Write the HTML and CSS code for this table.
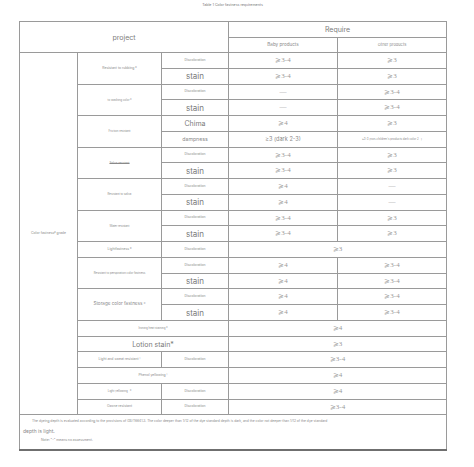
FILE: index.html
```html
<!DOCTYPE html>
<html>
<head>
<meta charset="utf-8">
<link rel="stylesheet" href="styles.css">
</head>
<body>
<div class="page">
  <div class="title">Table 1 Color fastness requirements</div>
  <table class="grid">
    <colgroup>
      <col class="c1"><col class="c2"><col class="c3"><col class="c4"><col class="c5">
    </colgroup>
    <tr class="h">
      <td colspan="3" rowspan="2" class="big">project</td>
      <td colspan="2" class="big">Require</td>
    </tr>
    <tr class="h">
      <td class="mid">Baby products</td>
      <td class="sm">Other products</td>
    </tr>
    <tr>
      <td rowspan="23" class="tiny">Color fastness<sup>a</sup> grade</td>
      <td rowspan="2" class="tiny">Resistant to rubbing <sup>b</sup></td>
      <td class="tiny">Discoloration</td>
      <td class="v">⩾3-4</td><td class="v">⩾3</td>
    </tr>
    <tr><td class="st">stain</td><td class="v">⩾3-4</td><td class="v">⩾3</td></tr>
    <tr>
      <td rowspan="2" class="xtiny">to washing color <sup>b</sup></td>
      <td class="tiny">Discoloration</td>
      <td class="v">—</td><td class="v">⩾3-4</td>
    </tr>
    <tr><td class="st">stain</td><td class="v">—</td><td class="v">⩾3-4</td></tr>
    <tr>
      <td rowspan="2" class="xtiny">Friction resistant</td>
      <td class="chima">Chima</td>
      <td class="v">⩾4</td><td class="v">⩾3</td>
    </tr>
    <tr><td class="damp">dampness</td><td class="dk">≥3 (dark 2-3)</td><td class="xtiny">≥3-3 (non-children's products dark color 2 &nbsp;&nbsp;)</td></tr>
    <tr>
      <td rowspan="2" class="xtiny"><span class="strike">Saliva resistant</span></td>
      <td class="tiny">Discoloration</td>
      <td class="v">⩾3-4</td><td class="v">⩾3</td>
    </tr>
    <tr><td class="st">stain</td><td class="v">⩾3-4</td><td class="v">⩾3</td></tr>
    <tr>
      <td rowspan="2" class="xtiny">Resistant to saliva</td>
      <td class="tiny">Discoloration</td>
      <td class="v">⩾4</td><td class="v">—</td>
    </tr>
    <tr><td class="st">stain</td><td class="v">⩾4</td><td class="v">—</td></tr>
    <tr>
      <td rowspan="2" class="xtiny">Water resistant</td>
      <td class="tiny">Discoloration</td>
      <td class="v">⩾3-4</td><td class="v">⩾3</td>
    </tr>
    <tr><td class="st">stain</td><td class="v">⩾3-4</td><td class="v">⩾3</td></tr>
    <tr>
      <td class="tiny">Lightfastness <sup>b</sup></td>
      <td class="tiny">Discoloration</td>
      <td colspan="2" class="v">⩾3</td>
    </tr>
    <tr>
      <td rowspan="2" class="xtiny">Resistant to perspiration color fastness</td>
      <td class="tiny">Discoloration</td>
      <td class="v">⩾4</td><td class="v">⩾3-4</td>
    </tr>
    <tr><td class="st">stain</td><td class="v">⩾4</td><td class="v">⩾3-4</td></tr>
    <tr>
      <td rowspan="2" class="mid">Storage color fastness <sup>c</sup></td>
      <td class="tiny">Discoloration</td>
      <td class="v">⩾4</td><td class="v">⩾3-4</td>
    </tr>
    <tr><td class="st">stain</td><td class="v">⩾4</td><td class="v">⩾3-4</td></tr>
    <tr>
      <td colspan="2" class="xtiny">Ironing heat staining <sup>d</sup></td>
      <td colspan="2" class="v">⩾4</td>
    </tr>
    <tr>
      <td colspan="2" class="chima">Lotion stain*</td>
      <td colspan="2" class="v">⩾3</td>
    </tr>
    <tr>
      <td class="tiny">Light and sweat resistant <sup>)</sup></td>
      <td class="tiny">Discoloration</td>
      <td colspan="2" class="v">⩾3-4</td>
    </tr>
    <tr>
      <td colspan="2" class="tiny">Phenol yellowing <sup>)</sup></td>
      <td colspan="2" class="v">⩾4</td>
    </tr>
    <tr>
      <td class="xtiny">Light yellowing &nbsp;&nbsp;<sup>d</sup></td>
      <td class="tiny">Discoloration</td>
      <td colspan="2" class="v">⩾4</td>
    </tr>
    <tr>
      <td class="tiny">Ozone resistant</td>
      <td class="tiny">Discoloration</td>
      <td colspan="2" class="v">⩾3-4</td>
    </tr>
    <tr class="notes">
      <td colspan="5">
        <div class="n1">The dyeing depth is evaluated according to the provisions of GB/T6641.3. The color deeper than 1/12 of the dye standard depth is dark, and the color not deeper than 1/12 of the dye standard</div>
        <div class="n2">depth is light.</div>
        <div class="n3">Note: "-" means no assessment.</div>
      </td>
    </tr>
  </table>
</div>
</body>
</html>
```
FILE: styles.css
```css
html, body {
  margin: 0;
  padding: 0;
  background: #fff;
}
body {
  font-family: Inter, "Noto Sans", "Liberation Sans", sans-serif;
  color: #8a8a8a;
}
.page {
  width: 474px;
  height: 467px;
  padding-left: 19px;
  box-sizing: border-box;
}
.title {
  width: 427px;
  text-align: center;
  font-size: 3.6px;
  line-height: 5px;
  padding-top: 3px;
  height: 21px;
  box-sizing: border-box;
  color: #777;
}
.grid {
  width: 427px;
  border-collapse: collapse;
  table-layout: fixed;
  border: 1.5px solid #6f6f6f;
}
.c1 { width: 58px; }
.c2 { width: 84px; }
.c3 { width: 67px; }
.c4 { width: 109px; }
.c5 { width: 109px; }
.grid td {
  border: 1px solid #9a9a9a;
  padding: 0;
  text-align: center;
  vertical-align: middle;
  height: 14.75px;
  line-height: 1;
  overflow: hidden;
  white-space: nowrap;
}
.grid tr.h td {
  height: 14.6px;
}
.grid sup {
  font-size: 70%;
  vertical-align: 40%;
}
.big { font-size: 7px; color: #7c7c7c; }
.mid { font-size: 4.6px; }
.sm { font-size: 4px; }
.tiny { font-size: 3.4px; }
.xtiny { font-size: 2.8px; }
.st { font-size: 8px; color: #7a7a7a; }
.chima { font-size: 7px; color: #7a7a7a; }
.damp { font-size: 5.2px; }
.dk { font-size: 5.6px; }
.v {
  font-family: "Liberation Serif", "DejaVu Serif", serif;
  font-size: 7px;
  color: #9a9a9a;
}
.strike {
  text-decoration: line-through;
}
.grid tr.notes td {
  height: 34px;
  text-align: left;
  vertical-align: top;
  white-space: normal;
  border-bottom: 2px solid #6f6f6f;
}
.n1 {
  font-size: 3.3px;
  padding-left: 12px;
  padding-top: 5px;
  height: 6px;
  white-space: nowrap;
}
.n2 {
  font-size: 5px;
  padding-left: 3px;
  padding-top: 3px;
  height: 7px;
}
.n3 {
  font-size: 3.4px;
  padding-left: 21px;
  padding-top: 3px;
}
```
